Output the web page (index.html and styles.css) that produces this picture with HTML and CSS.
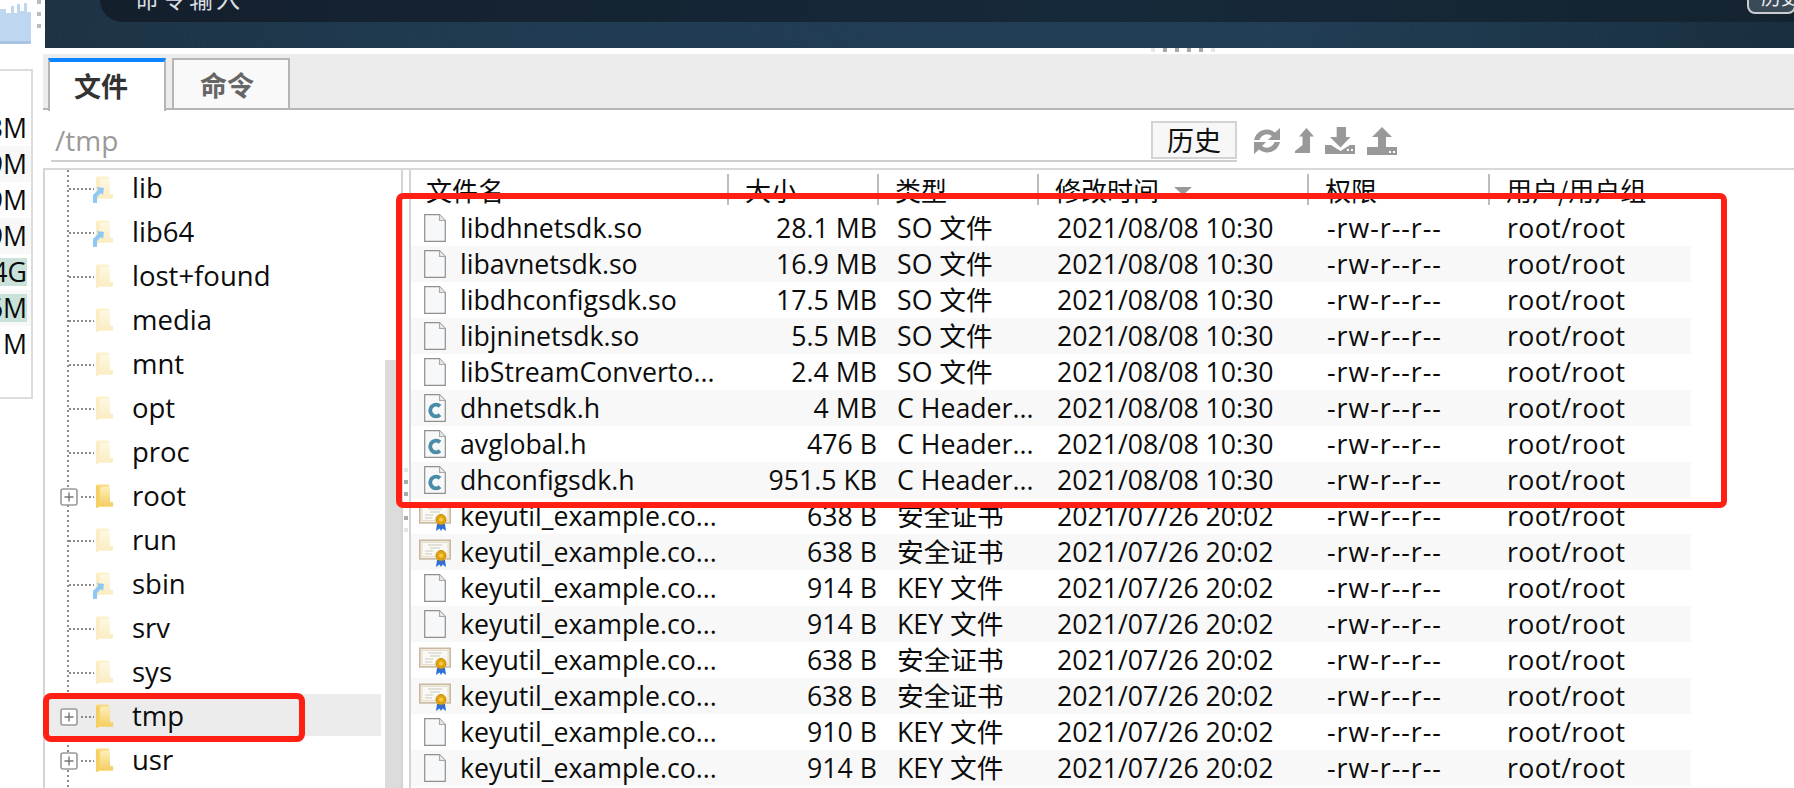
FILE: index.html
```html
<!DOCTYPE html>
<html lang="zh-CN">
<head>
<meta charset="utf-8">
<title>文件</title>
<link rel="stylesheet" href="styles.css">
</head>
<body>
<svg class="defs" width="0" height="0" aria-hidden="true">
  <symbol id="i-file" viewBox="0 0 22 28">
    <path d="M.7.7H15.5L21.3 6.5V27.3H.7Z" fill="#f7f8f9" stroke="#8f8f8f" stroke-width="1.2"/>
    <path d="M15.5.7V6.5H21.3" fill="#e8e8e8" stroke="#a8a8a8" stroke-width="1.1"/>
  </symbol>
  <symbol id="i-c" viewBox="0 0 22 28">
    <use href="#i-file" width="22" height="28"/>
    <path d="M16 12.2A5.8 5.8 0 1 0 16 20.8" fill="none" stroke="#4a8ba8" stroke-width="4"/>
  </symbol>
  <symbol id="i-cert" viewBox="0 0 32 28">
    <rect x=".8" y="1.3" width="30.4" height="18.6" fill="#f6f0e4" stroke="#c9b9a3" stroke-width="1.6"/>
    <rect x="3" y="3.5" width="26" height="14.2" fill="#fbf9f3" stroke="#dfd5c3" stroke-width=".7"/>
    <path d="M9 6H23M11 9H21M6 12H14M6 15H13" stroke="#c3c3bd" stroke-width=".9"/>
    <path d="M18 21 17 28 20.5 25.5 22 28 23.5 25.5 27 28 26 21Z" fill="#2f6fd6"/>
    <circle cx="22" cy="16.5" r="5" fill="#e2a50e" stroke="#c98b08"/>
    <circle cx="22" cy="16.5" r="2" fill="#f3cc4e"/>
  </symbol>
  <symbol id="i-folder" viewBox="0 0 20 26">
    <path d="M1 2 2 1H14L15 3 15.8 19H19V24H5L1 26Z" fill="#fad97e"/>
    <path d="M5 24 1 26V2L5 4Z" fill="#f6cf63"/>
    <path d="M7 3H15L16 20H19V24H5V6Z" fill="url(#g-folder)"/>
  </symbol>
  <linearGradient id="g-folder" x1="0" y1="0" x2="0" y2="1">
    <stop offset="0" stop-color="#fdeeb9"/>
    <stop offset="1" stop-color="#f5cd62"/>
  </linearGradient>
  <symbol id="i-link" viewBox="0 0 12 16">
    <path d="M5 0 12 1 11 8 9 6 5 10V16H1V8L6 3Z" fill="#8ec8f4"/>
  </symbol>
  <symbol id="i-plus" viewBox="0 0 18 18">
    <rect x="1" y="1" width="16" height="16" rx="2" fill="#fff" stroke="#9a9a9a" stroke-width="1.6"/>
    <path d="M4.500 9H13.500M9 4.500V13.500" stroke="#777" stroke-width="1.4"/>
  </symbol>
  <filter id="f-grain"><feTurbulence type="fractalNoise" baseFrequency=".9" numOctaves="2"/><feColorMatrix values="0 0 0 0 .6  0 0 0 0 .7  0 0 0 0 .8  0 0 0 .5 -.1"/></filter>
</svg>

<div class="page">
  <aside class="side">
    <div class="chart">
      <svg class="chart-svg" viewBox="0 0 31 44" width="31" height="44"><path d="M0 9H6V13H11V6H14V13H17V4H20V11H24V3H27V12H31V44H0Z" fill="#bed6f0"/><path d="M0 42.500H31" stroke="#9fbedd" stroke-width="2"/></svg>
      <div class="chart-dots"><i></i><i></i><i></i></div>
    </div>
    <div class="procs">
      <div class="proc">3M</div>
      <div class="proc alt">9M</div>
      <div class="proc">9M</div>
      <div class="proc alt">9M</div>
      <div class="proc"><span class="hot">4G</span></div>
      <div class="proc alt"><span class="hot">6M</span></div>
      <div class="proc">M</div>
    </div>
  </aside>

  <main class="main">
    <header class="top">
      <svg class="grain" width="100%" height="100%" aria-hidden="true"><rect width="100%" height="100%" filter="url(#f-grain)"/></svg>
      <div class="cmd"><span class="cmd-text">命令输入</span><span class="cmd-btn">历史</span></div>
    </header>
    <div class="handle"><i></i><i></i><i></i><i></i><i></i><i></i></div>
    <nav class="tabs">
      <div class="tab active">文件</div>
      <div class="tab second">命令</div>
    </nav>
    <div class="toolbar">
      <div class="path">
        <span class="path-text">/tmp</span>
        <button class="hist">历史</button>
      </div>
      <div class="tools">
        <svg class="tool t-refresh" viewBox="0 0 28 26"><path d="M1 12A13 13 0 0 1 22 4.500L27 0V12H15L19 8A8 8 0 0 0 6.500 12ZM27 14A13 13 0 0 1 6 21.500L1 26V14H13L9 18A8 8 0 0 0 21.500 14Z" fill="#999"/></svg>
        <svg class="tool t-up" viewBox="0 0 19 25"><path d="M11.500 0 19 8.500H15V25H0V23L7.500 17V8.500H4Z" fill="#999"/></svg>
        <svg class="tool t-down" viewBox="0 0 30 27"><path d="M11.700 0H21V10H25.500L15.500 20.500 5 10H11.700ZM0 27V18H6L15.500 24 25 18H30V27Z" fill="#999"/><path d="M22 23H24M26 23H28" stroke="#fff" stroke-width="2"/></svg>
        <svg class="tool t-upl" viewBox="0 0 30 28"><path d="M15 0 25 10H19V20H11V10H5ZM0 28V20H30V28Z" fill="#999"/><path d="M22 25H24M26 25H28" stroke="#fff" stroke-width="2"/></svg>
      </div>
    </div>

    <div class="body">
      <section class="tree">
        <div class="tree-line"></div>
        <div class="scroll"></div>
        <div class="node"><span class="dash"></span><span class="fold"><svg class="folder pale"><use href="#i-folder"/></svg><svg class="lnk"><use href="#i-link"/></svg></span><span class="name">lib</span></div>
        <div class="node"><span class="dash"></span><span class="fold"><svg class="folder pale"><use href="#i-folder"/></svg><svg class="lnk"><use href="#i-link"/></svg></span><span class="name">lib64</span></div>
        <div class="node"><span class="dash"></span><span class="fold"><svg class="folder pale"><use href="#i-folder"/></svg></span><span class="name">lost+found</span></div>
        <div class="node"><span class="dash"></span><span class="fold"><svg class="folder pale"><use href="#i-folder"/></svg></span><span class="name">media</span></div>
        <div class="node"><span class="dash"></span><span class="fold"><svg class="folder pale"><use href="#i-folder"/></svg></span><span class="name">mnt</span></div>
        <div class="node"><span class="dash"></span><span class="fold"><svg class="folder pale"><use href="#i-folder"/></svg></span><span class="name">opt</span></div>
        <div class="node"><span class="dash"></span><span class="fold"><svg class="folder pale"><use href="#i-folder"/></svg></span><span class="name">proc</span></div>
        <div class="node"><svg class="plus"><use href="#i-plus"/></svg><span class="dash"></span><span class="fold"><svg class="folder"><use href="#i-folder"/></svg></span><span class="name">root</span></div>
        <div class="node"><span class="dash"></span><span class="fold"><svg class="folder pale"><use href="#i-folder"/></svg></span><span class="name">run</span></div>
        <div class="node"><span class="dash"></span><span class="fold"><svg class="folder pale"><use href="#i-folder"/></svg><svg class="lnk"><use href="#i-link"/></svg></span><span class="name">sbin</span></div>
        <div class="node"><span class="dash"></span><span class="fold"><svg class="folder pale"><use href="#i-folder"/></svg></span><span class="name">srv</span></div>
        <div class="node"><span class="dash"></span><span class="fold"><svg class="folder pale"><use href="#i-folder"/></svg></span><span class="name">sys</span></div>
        <div class="node selected"><svg class="plus"><use href="#i-plus"/></svg><span class="dash"></span><span class="fold"><svg class="folder"><use href="#i-folder"/></svg></span><span class="name">tmp</span></div>
        <div class="node"><svg class="plus"><use href="#i-plus"/></svg><span class="dash"></span><span class="fold"><svg class="folder"><use href="#i-folder"/></svg></span><span class="name">usr</span></div>
      </section>

      <div class="split"><i></i><i></i><i></i><i></i><i></i><i></i></div>

      <section class="files">
        <div class="row head">
          <div class="th">文件名</div>
          <div class="th">大小</div>
          <div class="th">类型</div>
          <div class="th">修改时间<span class="sort"></span></div>
          <div class="th">权限</div>
          <div class="th">用户/用户组</div>
        </div>
        <div class="row"><div class="c-name"><svg class="ico"><use href="#i-file"/></svg>libdhnetsdk.so</div><div class="c-size">28.1 MB</div><div>SO 文件</div><div>2021/08/08 10:30</div><div>-rw-r--r--</div><div>root/root</div></div>
        <div class="row"><div class="c-name"><svg class="ico"><use href="#i-file"/></svg>libavnetsdk.so</div><div class="c-size">16.9 MB</div><div>SO 文件</div><div>2021/08/08 10:30</div><div>-rw-r--r--</div><div>root/root</div></div>
        <div class="row"><div class="c-name"><svg class="ico"><use href="#i-file"/></svg>libdhconfigsdk.so</div><div class="c-size">17.5 MB</div><div>SO 文件</div><div>2021/08/08 10:30</div><div>-rw-r--r--</div><div>root/root</div></div>
        <div class="row"><div class="c-name"><svg class="ico"><use href="#i-file"/></svg>libjninetsdk.so</div><div class="c-size">5.5 MB</div><div>SO 文件</div><div>2021/08/08 10:30</div><div>-rw-r--r--</div><div>root/root</div></div>
        <div class="row"><div class="c-name"><svg class="ico"><use href="#i-file"/></svg>libStreamConverto...</div><div class="c-size">2.4 MB</div><div>SO 文件</div><div>2021/08/08 10:30</div><div>-rw-r--r--</div><div>root/root</div></div>
        <div class="row"><div class="c-name"><svg class="ico"><use href="#i-c"/></svg>dhnetsdk.h</div><div class="c-size">4 MB</div><div>C Header...</div><div>2021/08/08 10:30</div><div>-rw-r--r--</div><div>root/root</div></div>
        <div class="row"><div class="c-name"><svg class="ico"><use href="#i-c"/></svg>avglobal.h</div><div class="c-size">476 B</div><div>C Header...</div><div>2021/08/08 10:30</div><div>-rw-r--r--</div><div>root/root</div></div>
        <div class="row"><div class="c-name"><svg class="ico"><use href="#i-c"/></svg>dhconfigsdk.h</div><div class="c-size">951.5 KB</div><div>C Header...</div><div>2021/08/08 10:30</div><div>-rw-r--r--</div><div>root/root</div></div>
        <div class="row"><div class="c-name"><svg class="ico cert"><use href="#i-cert"/></svg>keyutil_example.co...</div><div class="c-size">638 B</div><div>安全证书</div><div>2021/07/26 20:02</div><div>-rw-r--r--</div><div>root/root</div></div>
        <div class="row"><div class="c-name"><svg class="ico cert"><use href="#i-cert"/></svg>keyutil_example.co...</div><div class="c-size">638 B</div><div>安全证书</div><div>2021/07/26 20:02</div><div>-rw-r--r--</div><div>root/root</div></div>
        <div class="row"><div class="c-name"><svg class="ico"><use href="#i-file"/></svg>keyutil_example.co...</div><div class="c-size">914 B</div><div>KEY 文件</div><div>2021/07/26 20:02</div><div>-rw-r--r--</div><div>root/root</div></div>
        <div class="row"><div class="c-name"><svg class="ico"><use href="#i-file"/></svg>keyutil_example.co...</div><div class="c-size">914 B</div><div>KEY 文件</div><div>2021/07/26 20:02</div><div>-rw-r--r--</div><div>root/root</div></div>
        <div class="row"><div class="c-name"><svg class="ico cert"><use href="#i-cert"/></svg>keyutil_example.co...</div><div class="c-size">638 B</div><div>安全证书</div><div>2021/07/26 20:02</div><div>-rw-r--r--</div><div>root/root</div></div>
        <div class="row"><div class="c-name"><svg class="ico cert"><use href="#i-cert"/></svg>keyutil_example.co...</div><div class="c-size">638 B</div><div>安全证书</div><div>2021/07/26 20:02</div><div>-rw-r--r--</div><div>root/root</div></div>
        <div class="row"><div class="c-name"><svg class="ico"><use href="#i-file"/></svg>keyutil_example.co...</div><div class="c-size">910 B</div><div>KEY 文件</div><div>2021/07/26 20:02</div><div>-rw-r--r--</div><div>root/root</div></div>
        <div class="row"><div class="c-name"><svg class="ico"><use href="#i-file"/></svg>keyutil_example.co...</div><div class="c-size">914 B</div><div>KEY 文件</div><div>2021/07/26 20:02</div><div>-rw-r--r--</div><div>root/root</div></div>
      </section>
    </div>
  </main>

  <div class="mark mark-files"></div>
  <div class="mark mark-tmp"></div>
</div>
</body>
</html>
```
FILE: styles.css
```css
* { box-sizing: border-box; }
html, body { margin: 0; height: 100%; overflow: hidden; background: #fff; }
body { font-family: "Open Sans", "Noto Sans CJK SC", sans-serif; font-size: 26.7px; color: #0c0c0c; }
.defs { position: absolute; }
.page { position: relative; display: flex; width: 1794px; height: 788px; overflow: hidden; }

/* left remainder */
.side { width: 43px; flex: none; }
.chart { position: relative; height: 69px; }
.chart-svg { display: block; }
.chart-dots { position: absolute; left: 37px; top: 0; display: flex; flex-direction: column; gap: 8px; }
.chart-dots i { display: block; width: 4px; height: 4px; background: #bbb; }
.procs { width: 33px; height: 330px; border: 2px solid #dcdcdc; border-left: 0; padding-top: 39px; }
.proc { height: 36px; line-height: 36px; padding-right: 4px; background: #fff; white-space: nowrap; display: flex; justify-content: flex-end; align-items: center; }
.proc.alt { background: #f8f8f8; }
.hot { background: #c9e3da; height: 28px; line-height: 28px; }

/* main */
.main { flex: 1; min-width: 0; display: flex; flex-direction: column; }
.top { position: relative; height: 48px; margin-left: 2px; background: linear-gradient(90deg, #1a3042 0, #1d3950 30%, #1e3b52 70%, #162c3d 100%); padding-left: 55px; flex: none; }
.grain { position: absolute; left: 0; top: 0; opacity: .14; }
.cmd { position: relative; height: 22px; background: linear-gradient(90deg, #141f2c 0, #16293a 60%, #14232f 100%); border-bottom-left-radius: 22px; overflow: hidden; }
.cmd-text { position: absolute; left: 35px; top: -15px; color: #d8dde2; font-size: 24px; line-height: 26px; letter-spacing: 3px; font-family: "Noto Sans CJK SC", sans-serif; }
.cmd-btn { position: absolute; right: -2px; top: -14px; width: 49px; height: 28px; border: 2px solid #c9ccd0; border-radius: 8px; color: #e6e8ea; font-size: 20px; line-height: 18px; padding-left: 12px; background: #3a4a57; white-space: nowrap; overflow: hidden; font-family: "Noto Sans CJK SC", sans-serif; }
.handle { height: 6px; display: flex; gap: 8px; padding-left: 1108px; flex: none; }
.handle i { width: 4px; height: 4px; background: #a8a8a8; }
.handle i:first-child, .handle i:last-child { background: #e6e6e6; }
.tabs { height: 56px; flex: none; background: #ececec; border-bottom: 2px solid #b5b5b5; display: flex; gap: 6px; padding: 4px 0 0 5px; position: relative; }
.tab { width: 118px; height: 52px; background: #f9f9f9; border: 2px solid #b5b5b5; color: #666; font-weight: 700; font-size: 27px; text-align: center; line-height: 50px; font-family: "Noto Sans CJK SC", sans-serif; }
.tab.second { padding-right: 8px; }
.tab.active { background: #fff; border-top: 4px solid #0a84ff; border-bottom: 0; height: 53px; color: #333; line-height: 48px; padding-right: 12px; }

.toolbar { height: 58px; flex: none; display: flex; align-items: flex-start; padding-left: 8px; }
.path { width: 1186px; height: 52px; border-bottom: 2px solid #cfcfcf; display: flex; justify-content: space-between; align-items: flex-end; flex: none; }
.path-text { color: #9a9a9a; font-size: 28px; line-height: 32px; padding: 0 0 4px 4px; }
.hist { width: 86px; height: 38px; padding: 0; background: #f7f7f7; border: 2px solid #d3d3d3; font: 27px/30px "Noto Sans CJK SC", sans-serif; color: #111; margin-bottom: 1px; }
.tools { display: flex; align-items: center; padding: 15px 0 0 16px; height: 46px; }
.tool { display: block; }
.t-refresh { width: 28px; height: 26px; }
.t-up { width: 19px; height: 25px; margin-left: 14px; }
.t-down { width: 30px; height: 27px; margin-left: 11px; }
.t-upl { width: 30px; height: 28px; margin-left: 12px; }

.body { flex: 1; min-height: 0; display: flex; border-top: 2px solid #d8d8d8; }

/* tree */
.tree { position: relative; width: 360px; flex: none; border-left: 2px solid #d4d4d4; border-right: 2px solid #d4d4d4; font-size: 27.5px; overflow: hidden; }
.tree-line { position: absolute; left: 22px; top: 0; bottom: 0; width: 2px; background: repeating-linear-gradient(#8a8a8a 0 2px, transparent 2px 5px); }
.scroll { position: absolute; right: 0; top: 190px; bottom: 0; width: 16px; background: #dcdcdc; }
.node { position: relative; height: 44px; width: 336px; }
.node:nth-child(3) { margin-top: -4px; }
.node.selected { background: linear-gradient(#ececec, #ececec) 0 0 / 100% 42px no-repeat; }
.dash { position: absolute; left: 24px; top: 22px; width: 25px; height: 2px; background: repeating-linear-gradient(90deg, #8a8a8a 0 2px, transparent 2px 4px); }
.plus { position: absolute; left: 15px; top: 14px; width: 18px; height: 18px; }
.plus + .dash { left: 36px; width: 13px; }
.fold { position: absolute; left: 50px; top: 9px; width: 19px; height: 26px; }
.folder { display: block; width: 19px; height: 26px; }
.folder.pale { opacity: .38; }
.lnk { position: absolute; left: -3px; top: 12px; width: 12px; height: 16px; }
.name { position: absolute; left: 87px; top: 0; line-height: 44px; white-space: nowrap; }

/* splitter */
.split { width: 6px; flex: none; padding-top: 298px; display: flex; flex-direction: column; align-items: center; gap: 8px; }
.split i { width: 4px; height: 4px; flex: none; background: #aaa; }
.split i:first-child, .split i:last-child { background: #e4e4e4; }

/* file list */
.files { flex: 1; border-left: 2px solid #d4d4d4; padding-top: 3px; min-width: 0; }
.row { display: grid; grid-template-columns: 318px 150px 160px 270px 181px 201px; width: 1280px; height: 36px; line-height: 36px; white-space: nowrap; }
.row:nth-child(odd) { background: #f8f8f8; }
.row.head { background: none; height: 37px; font-family: "Noto Sans CJK SC", sans-serif; font-size: 26px; }
.row > div { padding-left: 18px; }
.row > div:nth-child(5) { letter-spacing: 1px; }
.row > div:nth-child(6) { letter-spacing: .4px; padding-left: 17px; }
.row > .c-name { display: flex; align-items: center; padding-left: 13px; }
.row > .c-size { padding: 0 2px 0 0; text-align: right; }
.row.head > .th { border-left: 2px solid #bdbdbd; height: 31px; line-height: 32px; margin-top: 1px; margin-left: -2px; padding-left: 16px; letter-spacing: 0; position: relative; }
.row.head > .th:first-child { border-left: 0; margin-left: 0; padding-left: 15px; }
.sort { position: absolute; left: 135px; top: 13px; border: 9px solid transparent; border-top: 8px solid #999; border-bottom: 0; }
.ico { width: 22px; height: 28px; margin-right: 14px; flex: none; }
.ico.cert { width: 32px; margin: 2px 9px 0 -5px; }

/* annotation marks */
.mark { position: absolute; border: 6px solid #ff2013; border-radius: 7px; pointer-events: none; }
.mark-files { left: 396px; top: 193px; width: 1331px; height: 315px; }
.mark-tmp { left: 43px; top: 693px; width: 262px; height: 49px; border-radius: 8px; }
```
